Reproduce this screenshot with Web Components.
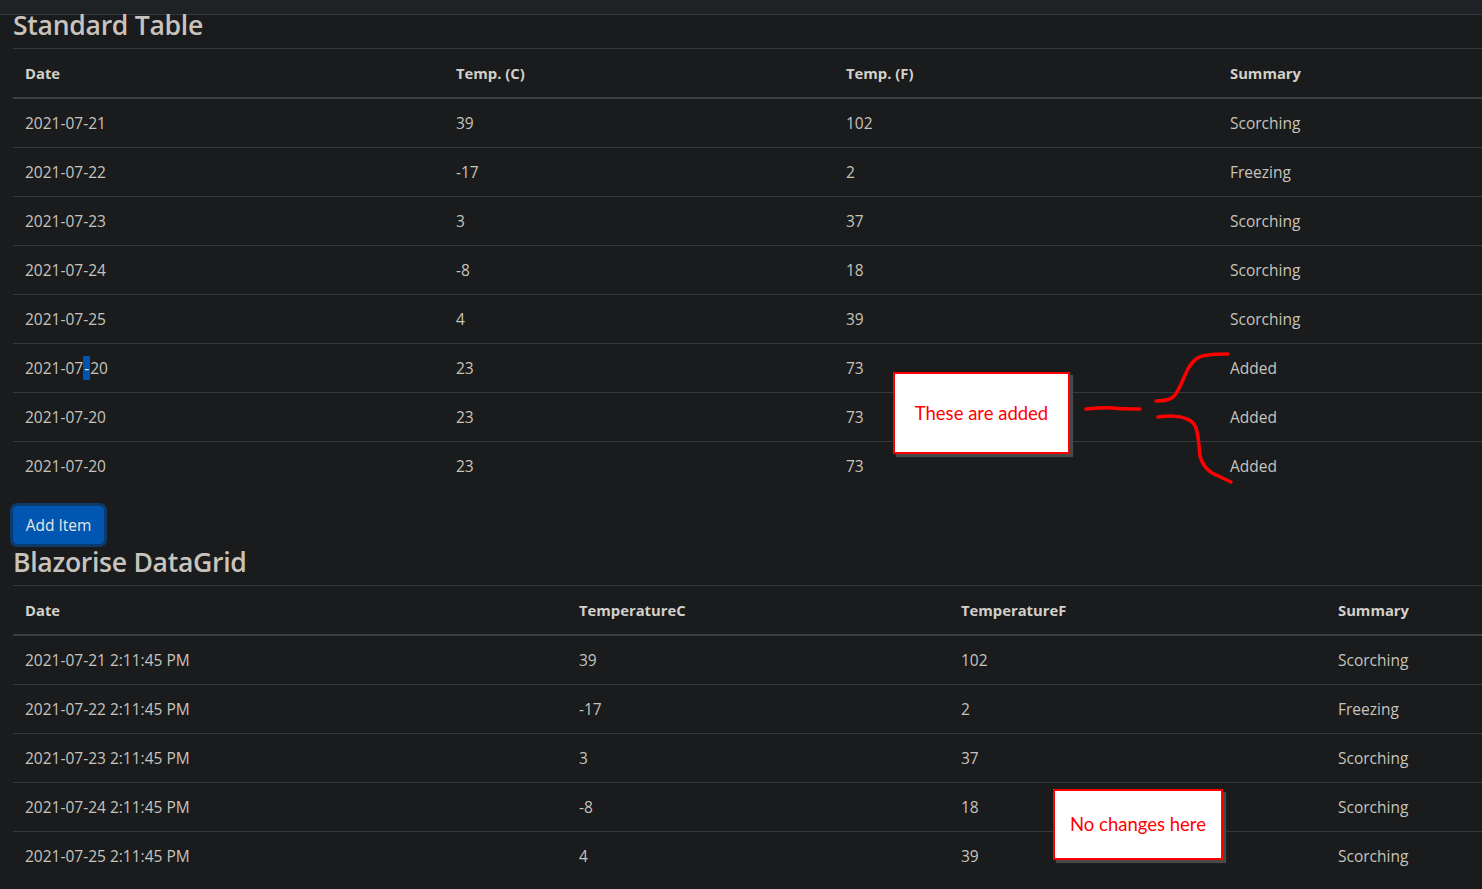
<!doctype html>
<html>
<head>
<meta charset="utf-8">
<title>Tables</title>
<style>
  html, body { margin: 0; height: 100%; background: #191b1d; overflow: hidden; }
  body { font-family: "Open Sans", "Liberation Sans", sans-serif; font-size: 15.5px; color: #c8c3bc; }
</style>
</head>
<body>
<app-page>
  <page-title first>Standard Table</page-title>
  <data-table style="--cols: 431px 390px 384px 1fr">
    <table-row head><span>Date</span><span>Temp. (C)</span><span>Temp. (F)</span><span>Summary</span></table-row>
    <table-row><span>2021-07-21</span><span>39</span><span>102</span><span>Scorching</span></table-row>
    <table-row><span>2021-07-22</span><span>-17</span><span>2</span><span>Freezing</span></table-row>
    <table-row><span>2021-07-23</span><span>3</span><span>37</span><span>Scorching</span></table-row>
    <table-row><span>2021-07-24</span><span>-8</span><span>18</span><span>Scorching</span></table-row>
    <table-row><span>2021-07-25</span><span>4</span><span>39</span><span>Scorching</span></table-row>
    <table-row><span>2021-07<text-selection>-</text-selection>20</span><span>23</span><span>73</span><span>Added</span></table-row>
    <table-row><span>2021-07-20</span><span>23</span><span>73</span><span>Added</span></table-row>
    <table-row last><span>2021-07-20</span><span>23</span><span>73</span><span>Added</span></table-row>
  </data-table>
  <action-button>Add Item</action-button>
  <page-title>Blazorise DataGrid</page-title>
  <data-table style="--cols: 554px 382px 377px 1fr">
    <table-row head><span>Date</span><span>TemperatureC</span><span>TemperatureF</span><span>Summary</span></table-row>
    <table-row><span>2021-07-21 2:11:45 PM</span><span>39</span><span>102</span><span>Scorching</span></table-row>
    <table-row><span>2021-07-22 2:11:45 PM</span><span>-17</span><span>2</span><span>Freezing</span></table-row>
    <table-row><span>2021-07-23 2:11:45 PM</span><span>3</span><span>37</span><span>Scorching</span></table-row>
    <table-row><span>2021-07-24 2:11:45 PM</span><span>-8</span><span>18</span><span>Scorching</span></table-row>
    <table-row last><span>2021-07-25 2:11:45 PM</span><span>4</span><span>39</span><span>Scorching</span></table-row>
  </data-table>
  <note-box slot="overlay" style="left:893px;top:372px;width:177px;height:82px">These are added</note-box>
  <note-box slot="overlay" style="left:1053px;top:789px;width:170px;height:71px">No changes here</note-box>
  <red-scribble slot="overlay"></red-scribble>
</app-page>

<script>
// Pagina completa: barra superior y contenido
class AppPage extends HTMLElement {
  constructor () {
    super()
    this.attachShadow({ mode: 'open' })
    this.shadowRoot.innerHTML = /* HTML */`
      <style>
        :host { display: block; position: relative; height: 889px; overflow: hidden; }
        .bar { height: 14px; background: #1f2224; border-bottom: 1px solid #35393b; }
        main { padding-left: 13px; }
      </style>
      <div class="bar"></div>
      <main><slot></slot></main>
      <slot name="overlay"></slot>
    `
  }
}

class PageTitle extends HTMLElement {
  constructor () {
    super()
    this.attachShadow({ mode: 'open' })
    this.shadowRoot.innerHTML = /* HTML */`
      <style>
        :host { display: block; font-size: 26.6px; font-weight: 600; letter-spacing: -0.3px; line-height: 34px; padding-bottom: 6px; color: #c8c3bc; }
        :host([first]) { margin-top: -7px; }
      </style>
      <slot></slot>
    `
  }
}

class DataTable extends HTMLElement {
  constructor () {
    super()
    this.attachShadow({ mode: 'open' })
    this.shadowRoot.innerHTML = /* HTML */`
      <style>
        :host { display: block; border-top: 1px solid #35393b; }
      </style>
      <slot></slot>
    `
  }
}

class TableRow extends HTMLElement {
  constructor () {
    super()
    this.attachShadow({ mode: 'open' })
    this.shadowRoot.innerHTML = /* HTML */`
      <style>
        :host {
          display: grid;
          grid-template-columns: var(--cols);
          border-bottom: 1px solid #35393b;
          line-height: 25px;
          height: 49px;
          box-sizing: border-box;
        }
        :host([head]) { font-size: 14.8px; font-weight: 700; line-height: 24px; color: #d3cfc9; border-bottom: 2px solid #3a4042; height: 50px; }
        :host([last]) { border-bottom-color: transparent; }
        ::slotted(span) { padding: 12px 12px 10px; }
      </style>
      <slot></slot>
    `
  }
}

class TextSelection extends HTMLElement {
  constructor () {
    super()
    this.attachShadow({ mode: 'open' })
    this.shadowRoot.innerHTML = /* HTML */`
      <style>
        :host {
          display: inline-block;
          color: #e8e6e3;
          padding: 0 1px;
          background: linear-gradient(#0054ad, #0054ad) no-repeat top / 100% 24px;
        }
      </style>
      <slot></slot>
    `
  }
}

class ActionButton extends HTMLElement {
  constructor () {
    super()
    this.attachShadow({ mode: 'open' })
    this.shadowRoot.innerHTML = /* HTML */`
      <style>
        :host { display: block; width: fit-content; margin-top: 15px; margin-bottom: 1px; }
        button {
          display: block;
          box-sizing: border-box;
          width: 91px;
          height: 38px;
          padding: 0;
          font: inherit;
          color: #e8e6e3;
          background: #0056b0;
          border: 1px solid #0056b0;
          border-radius: 4px;
          box-shadow: 0 0 0 3px #0c3a6b;
        }
      </style>
      <button type="button"><slot></slot></button>
    `
  }
}

// Notas rojas sobre la captura
class NoteBox extends HTMLElement {
  constructor () {
    super()
    this.attachShadow({ mode: 'open' })
    this.shadowRoot.innerHTML = /* HTML */`
      <style>
        :host {
          position: absolute;
          box-sizing: border-box;
          display: flex;
          align-items: center;
          justify-content: center;
          background: #fff;
          color: #f00;
          border: 2px solid #f00;
          box-shadow: 3px 3px 1px #484848;
          font-family: Lato, "Liberation Sans", sans-serif;
          font-size: 18.5px;
          padding-bottom: 1px;
        }
      </style>
      <slot></slot>
    `
  }
}

class RedScribble extends HTMLElement {
  constructor () {
    super()
    this.attachShadow({ mode: 'open' })
    this.shadowRoot.innerHTML = /* HTML */`
      <style>
        :host { position: absolute; left: 0; top: 0; }
        svg { display: block; }
        path { fill: none; stroke: #f00; stroke-width: 3.5; stroke-linecap: round; stroke-linejoin: round; }
      </style>
      <svg width="1482" height="889" viewBox="0 0 1482 889">
        <path d="M1156 401 C1165 401 1172 400 1175 395 C1181 387 1184 376 1188 369 C1193 360 1198 356 1208 355 C1215 354 1222 354 1228 354"/>
        <path d="M1086 409 C1095 408 1105 407 1113 408 C1122 409 1131 409 1140 409"/>
        <path d="M1158 417 C1168 416 1178 415 1187 419 C1193 421 1196 425 1197 432 C1199 440 1199 448 1200 456 C1202 464 1206 469 1212 473 C1218 476 1225 479 1231 482"/>
      </svg>
    `
  }
}

customElements.define('app-page', AppPage)
customElements.define('page-title', PageTitle)
customElements.define('data-table', DataTable)
customElements.define('table-row', TableRow)
customElements.define('text-selection', TextSelection)
customElements.define('action-button', ActionButton)
customElements.define('note-box', NoteBox)
customElements.define('red-scribble', RedScribble)
</script>
</body>
</html>
